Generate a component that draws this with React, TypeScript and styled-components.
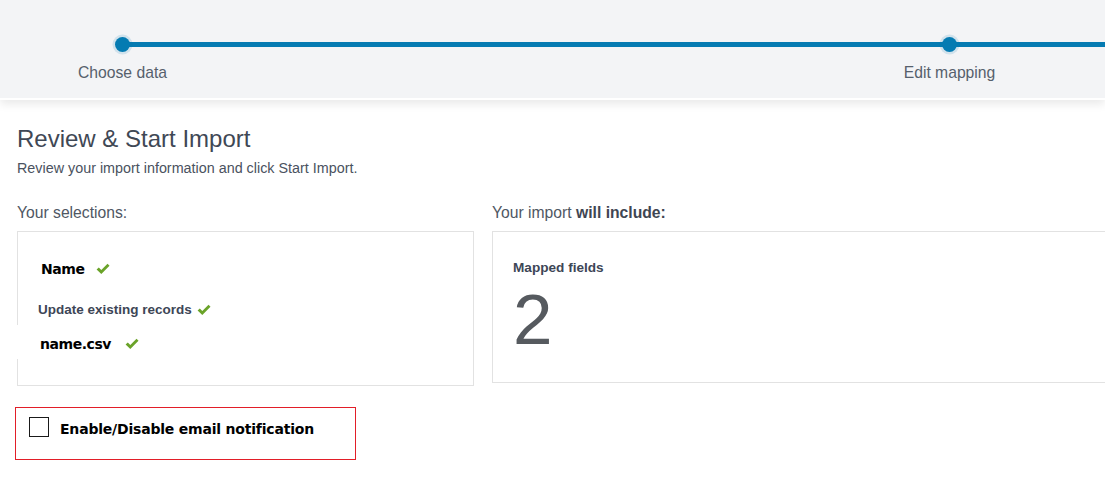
import React from 'react';
import styled, { createGlobalStyle } from 'styled-components';

const GlobalStyle = createGlobalStyle`
  html, body {
    margin: 0;
    padding: 0;
    background: #fff;
    overflow: hidden;
  }
  body {
    font-family: 'Liberation Sans', Arial, sans-serif;
  }
`;

// only the first two steps fit in the frame; the second one's
// connector runs on toward the next (off-screen) step
const steps = ['Choose data', 'Edit mapping'];

const selections = [
  { label: 'Name', kind: 'main' as const },
  { label: 'Update existing records', kind: 'option' as const },
  { label: 'name.csv', kind: 'file' as const },
];

const Check = () => (
  <CheckIcon viewBox="0 0 14 12" aria-hidden="true">
    <path d="M0.6 6.6 L2.8 4.5 L5.3 7 L11.5 0.7 L13.5 2.7 L5.3 10.9 Z" fill="#6aa329" />
  </CheckIcon>
);

export default function App() {
  return (
    <>
      <GlobalStyle />
      <Header>
        <Stepper>
          {steps.map((s) => (
            <Step key={s}>
              <Dot />
              <StepLabel>{s}</StepLabel>
            </Step>
          ))}
        </Stepper>
      </Header>

      <Content>
        <Title>Review &amp; Start Import</Title>
        <Subtitle>Review your import information and click Start Import.</Subtitle>

        <Columns>
          <Column>
            <SectionLabel>Your selections:</SectionLabel>
            <SelectionBox>
              {selections.map((item) => (
                <SelectionRow key={item.label} kind={item.kind}>
                  <SelectionText kind={item.kind}>{item.label}</SelectionText>
                  <Check />
                </SelectionRow>
              ))}
            </SelectionBox>
          </Column>
          <Column>
            <SectionLabel>
              Your import <b>will include:</b>
            </SectionLabel>
            <SummaryBox>
              <SummaryTitle>Mapped fields</SummaryTitle>
              <SummaryCount>2</SummaryCount>
            </SummaryBox>
          </Column>
        </Columns>

        <NotifyBox>
          <NotifyLabel>
            <CheckBox type="checkbox" />
            <NotifyText>Enable/Disable email notification</NotifyText>
          </NotifyLabel>
        </NotifyBox>
      </Content>
    </>
  );
}

const Header = styled.header`
  background: #f3f4f6;
  height: 98px;
  border-bottom: 2px solid #fff;
  box-shadow: 0 4px 9px rgba(0, 0, 0, 0.09);
  overflow: hidden;
  position: relative;
`;

const Stepper = styled.div`
  display: flex;
  margin-left: -291px;
  padding-top: 37px;
`;

const Step = styled.div`
  flex: 0 0 827px;
  display: flex;
  flex-direction: column;
  align-items: center;
  position: relative;

  &::after {
    content: '';
    position: absolute;
    top: 5px;
    left: 50%;
    width: 100%;
    height: 5px;
    background: #057bb2;
  }
`;

const Dot = styled.span`
  width: 15px;
  height: 15px;
  border-radius: 50%;
  background: #057bb2;
  box-shadow: 0 0 0 2.5px rgba(5, 123, 178, 0.14);
  position: relative;
  z-index: 1;
`;

const StepLabel = styled.span`
  margin-top: 11px;
  font-size: 15.7px;
  line-height: 20px;
  color: #56606c;
  white-space: nowrap;
`;

const Content = styled.main`
  padding: 25px 0 0 17px;
  width: 1240px;
`;

const Title = styled.h1`
  margin: 0;
  font-size: 24px;
  line-height: 28px;
  font-weight: normal;
  color: #3f4855;
`;

const Subtitle = styled.p`
  margin: 6px 0 0;
  font-size: 14.35px;
  line-height: 18px;
  color: #4a5260;
`;

const Columns = styled.div`
  display: grid;
  grid-template-columns: 457px 1fr;
  column-gap: 18px;
  align-items: start;
  margin-top: 26px;
`;

const Column = styled.section`
  display: flex;
  flex-direction: column;
`;

const SectionLabel = styled.h2`
  margin: 0 0 8px;
  font-size: 15.7px;
  line-height: 20px;
  font-weight: normal;
  color: #4f5763;

  b {
    font-weight: bold;
    color: #3f4652;
  }
`;

const SelectionBox = styled.div`
  border: 1px solid #e2e2e2;
  padding: 28px 0 26px;
  display: flex;
  flex-direction: column;
`;

type Kind = 'main' | 'option' | 'file';

const SelectionRow = styled.div<{ kind: Kind }>`
  display: flex;
  align-items: flex-end;
  background: #fff;
  ${({ kind }) =>
    kind === 'main'
      ? 'gap: 12px; padding-left: 23px;'
      : kind === 'option'
      ? 'gap: 5px; padding-left: 20px; margin-top: 23px; margin-bottom: 6px;'
      : 'gap: 14px; padding: 10px 0 6px 23px; margin-left: -1px;'}
`;

const SelectionText = styled.span<{ kind: Kind }>`
  font-family: ${({ kind }) =>
    kind === 'option'
      ? "'Liberation Sans', Arial, sans-serif"
      : "'DejaVu Sans', Verdana, sans-serif"};
  font-size: ${({ kind }) => (kind === 'option' ? '13.5px' : '14px')};
  letter-spacing: ${({ kind }) => (kind === 'option' ? '0' : '-0.45px')};
  line-height: 18px;
  font-weight: bold;
  color: ${({ kind }) => (kind === 'option' ? '#3d4656' : '#000')};
`;

const CheckIcon = styled.svg`
  width: 14px;
  height: 12px;
  margin-bottom: 3px;
  flex-shrink: 0;
`;

const SummaryBox = styled.div`
  border: 1px solid #e2e2e2;
  padding: 28px 20px 27px;
`;

const SummaryTitle = styled.h3`
  margin: 0;
  font-size: 13.6px;
  line-height: 16px;
  font-weight: bold;
  color: #3d4656;
`;

const SummaryCount = styled.div`
  margin-top: 8px;
  font-size: 71px;
  line-height: 71px;
  color: #565a5f;
`;

const NotifyBox = styled.div`
  width: 313px;
  margin: 21px 0 0 -2px;
  padding: 9px 13px 20px;
  border: 1px solid red;
  border-color: rgb(226, 30, 40);
`;

const NotifyLabel = styled.label`
  display: flex;
  align-items: flex-start;
  gap: 11px;
`;

const CheckBox = styled.input`
  appearance: none;
  margin: 0;
  width: 20px;
  height: 20px;
  border: 1.5px solid #1a1a1a;
  background: #fff;
  box-sizing: border-box;
  flex-shrink: 0;
`;

const NotifyText = styled.span`
  margin-top: 2px;
  font-family: 'DejaVu Sans', Verdana, sans-serif;
  font-size: 14px;
  letter-spacing: -0.2px;
  line-height: 20px;
  font-weight: bold;
  color: #000;
  white-space: nowrap;
`;
